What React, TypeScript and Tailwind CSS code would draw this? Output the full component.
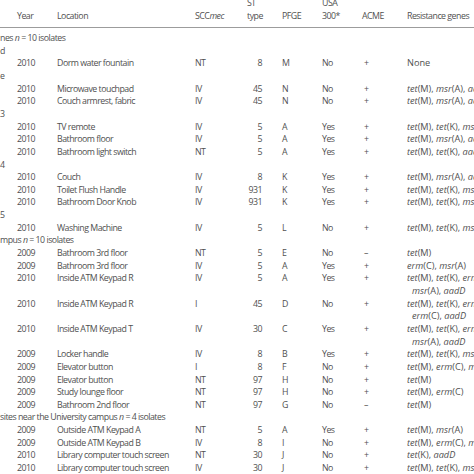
import React from 'react';

type Row = {
  year: string;
  loc: string;
  scc: string;
  st: string;
  pfge: string;
  usa: string;
  acme: string;
  genes: React.ReactNode;
  genes2?: React.ReactNode;
};

type Item = { group: string } | Row;

const I = ({ children }: { children: React.ReactNode }) => <i>{children}</i>;

const tetM = <><I>tet</I>(M)</>;
const tetK = <><I>tet</I>(K)</>;
const msrA = <><I>msr</I>(A)</>;
const ermC = <><I>erm</I>(C)</>;
const ermA = <><I>erm</I>(A)</>;
const aadD = <I>aadD</I>;

const items: Item[] = [
  { group: 'nes n = 10 isolates' },
  { group: 'd' },
  { year: '2010', loc: 'Dorm water fountain', scc: 'NT', st: '8', pfge: 'M', usa: 'No', acme: '+', genes: 'None' },
  { group: 'e' },
  { year: '2010', loc: 'Microwave touchpad', scc: 'IV', st: '45', pfge: 'N', usa: 'No', acme: '+', genes: <>{tetM}, {msrA}, {aadD}</> },
  { year: '2010', loc: 'Couch armrest, fabric', scc: 'IV', st: '45', pfge: 'N', usa: 'No', acme: '+', genes: <>{tetM}, {msrA}, {aadD}</> },
  { group: '3' },
  { year: '2010', loc: 'TV remote', scc: 'IV', st: '5', pfge: 'A', usa: 'Yes', acme: '+', genes: <>{tetM}, {tetK}, {msrA}</> },
  { year: '2010', loc: 'Bathroom floor', scc: 'IV', st: '5', pfge: 'A', usa: 'Yes', acme: '+', genes: <>{tetM}, {msrA}, {aadD}</> },
  { year: '2010', loc: 'Bathroom light switch', scc: 'NT', st: '5', pfge: 'A', usa: 'Yes', acme: '+', genes: <>{tetM}, {tetK}, {aadD}</> },
  { group: '4' },
  { year: '2010', loc: 'Couch', scc: 'IV', st: '8', pfge: 'K', usa: 'Yes', acme: '+', genes: <>{tetM}, {msrA}, {aadD}</> },
  { year: '2010', loc: 'Toilet Flush Handle', scc: 'IV', st: '931', pfge: 'K', usa: 'Yes', acme: '+', genes: <>{tetM}, {tetK}, {msrA}</> },
  { year: '2010', loc: 'Bathroom Door Knob', scc: 'IV', st: '931', pfge: 'K', usa: 'Yes', acme: '+', genes: <>{tetM}, {tetK}, {msrA}</> },
  { group: '5' },
  { year: '2010', loc: 'Washing Machine', scc: 'IV', st: '5', pfge: 'L', usa: 'No', acme: '+', genes: <>{tetM}, {tetK}, {msrA}</> },
  { group: 'mpus n = 10 isolates' },
  { year: '2009', loc: 'Bathroom 3rd floor', scc: 'NT', st: '5', pfge: 'E', usa: 'No', acme: '–', genes: tetM },
  { year: '2009', loc: 'Bathroom 3rd floor', scc: 'IV', st: '5', pfge: 'A', usa: 'Yes', acme: '+', genes: <>{ermC}, {msrA}</> },
  { year: '2010', loc: 'Inside ATM Keypad R', scc: 'IV', st: '5', pfge: 'A', usa: 'Yes', acme: '+', genes: <>{tetM}, {tetK}, {ermC},</>, genes2: <>{msrA}, {aadD}</> },
  { year: '2010', loc: 'Inside ATM Keypad R', scc: 'I', st: '45', pfge: 'D', usa: 'No', acme: '+', genes: <>{tetM}, {tetK}, {ermA},</>, genes2: <>{ermC}, {aadD}</> },
  { year: '2010', loc: 'Inside ATM Keypad T', scc: 'IV', st: '30', pfge: 'C', usa: 'Yes', acme: '+', genes: <>{tetM}, {tetK}, {ermC},</>, genes2: <>{msrA}, {aadD}</> },
  { year: '2009', loc: 'Locker handle', scc: 'IV', st: '8', pfge: 'B', usa: 'Yes', acme: '+', genes: <>{tetM}, {tetK}, {msrA}</> },
  { year: '2009', loc: 'Elevator button', scc: 'I', st: '8', pfge: 'F', usa: 'No', acme: '+', genes: <>{tetM}, {ermC}, {msrA}</> },
  { year: '2009', loc: 'Elevator button', scc: 'NT', st: '97', pfge: 'H', usa: 'No', acme: '+', genes: tetM },
  { year: '2009', loc: 'Study lounge floor', scc: 'NT', st: '97', pfge: 'H', usa: 'No', acme: '+', genes: <>{tetM}, {ermC}</> },
  { year: '2009', loc: 'Bathroom 2nd floor', scc: 'NT', st: '97', pfge: 'G', usa: 'No', acme: '–', genes: tetM },
  { group: 'sites near the University campus n = 4 isolates' },
  { year: '2009', loc: 'Outside ATM Keypad A', scc: 'NT', st: '5', pfge: 'A', usa: 'Yes', acme: '+', genes: <>{tetM}, {msrA}</> },
  { year: '2009', loc: 'Outside ATM Keypad B', scc: 'IV', st: '8', pfge: 'I', usa: 'No', acme: '+', genes: <>{tetM}, {ermC}, {msrA}</> },
  { year: '2010', loc: 'Library computer touch screen', scc: 'NT', st: '30', pfge: 'J', usa: 'No', acme: '+', genes: <>{tetK}, {aadD}</> },
  { year: '2010', loc: 'Library computer touch screen', scc: 'IV', st: '30', pfge: 'J', usa: 'No', acme: '+', genes: <>{tetM}, {tetK}, {msrA}</> },
];

const GroupLabel = ({ text }: { text: string }) => {
  // the n in "n = x isolates" is italic in the source table
  const m = text.match(/^(.*?)n( = .*)$/);
  return (
    <div className="h-[12.65px] whitespace-nowrap">
      {m ? <>{m[1]}<i>n</i>{m[2]}</> : text}
    </div>
  );
};

const DataRow = ({ row }: { row: Row }) => (
  <div className="flex whitespace-nowrap">
    <div className="w-[17px] shrink-0" />
    <div className="w-[40px] shrink-0">{row.year}</div>
    <div className="w-[138px] shrink-0">{row.loc}</div>
    <div className="w-[40px] shrink-0">{row.scc}</div>
    <div className="w-[27px] shrink-0 text-right">{row.st}</div>
    <div className="w-[20px] shrink-0" />
    <div className="w-[40px] shrink-0">{row.pfge}</div>
    <div className="w-[40px] shrink-0">{row.usa}</div>
    <div className="w-[45px] shrink-0 pl-[2px]">{row.acme}</div>
    <div className="flex-1 overflow-hidden text-[9.2px] tracking-[0px]">
      <div className="h-[12.65px]">{row.genes}</div>
      {row.genes2 && <div className="h-[12.65px] pl-[5px]">{row.genes2}</div>}
    </div>
  </div>
);

const App = () => {
  return (
    <div
      className="w-[474px] h-[474px] overflow-hidden bg-white text-[#505050] text-[8.8px] tracking-[-0.5px] leading-[12.65px]"
      style={{ fontFamily: '"Open Sans", "Noto Sans", sans-serif' }}
    >
      {/* HEADER */}
      <div className="-mt-[3px] pb-[4px] border-b border-[#9c9c9c] flex whitespace-nowrap leading-[13px]">
        <div className="w-[17px] shrink-0" />
        <div className="w-[40px] shrink-0 pt-[13px]">Year</div>
        <div className="w-[138px] shrink-0 pt-[13px]">Location</div>
        <div className="w-[52px] shrink-0 pt-[13px]">SCC<i>mec</i></div>
        <div className="w-[35px] shrink-0">
          <div>ST</div>
          <div>type</div>
        </div>
        <div className="w-[40px] shrink-0 pt-[13px]">PFGE</div>
        <div className="w-[40px] shrink-0">
          <div>USA</div>
          <div>300*</div>
        </div>
        <div className="w-[45px] shrink-0 pt-[13px]">ACME</div>
        <div className="flex-1 pt-[13px]">Resistance genes</div>
      </div>

      {/* BODY */}
      <div className="pt-[4px]">
        {items.map((item, i) =>
          'group' in item ? <GroupLabel key={i} text={item.group} /> : <DataRow key={i} row={item} />
        )}
      </div>
    </div>
  );
};

export default App;
